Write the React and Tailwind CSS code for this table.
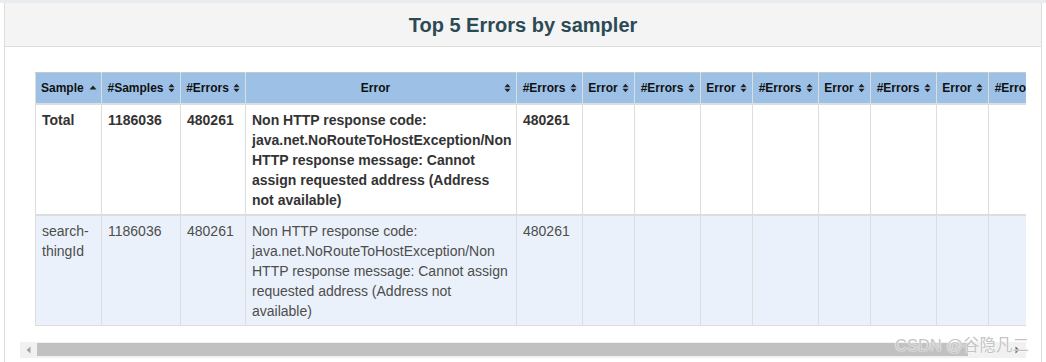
import React from 'react';

const columns = [
  { label: 'Sample', w: 'w-[66px]', sort: 'asc' },
  { label: '#Samples', w: 'w-[79px]' },
  { label: '#Errors', w: 'w-[65px]' },
  { label: 'Error', w: 'w-[271px]' },
  { label: '#Errors', w: 'w-[66px]' },
  { label: 'Error', w: 'w-[52px]' },
  { label: '#Errors', w: 'w-[66px]' },
  { label: 'Error', w: 'w-[52px]' },
  { label: '#Errors', w: 'w-[66px]' },
  { label: 'Error', w: 'w-[52px]' },
  { label: '#Errors', w: 'w-[66px]' },
  { label: 'Error', w: 'w-[52px]' },
  { label: '#Errors', w: 'w-[66px]' },
  { label: 'Error', w: 'w-[52px]' },
];

const errorText =
  'Non HTTP response code: java.net.NoRouteToHostException/Non HTTP response message: Cannot assign requested address (Address not available)';

const rows = [
  { cells: ['Total', '1186036', '480261', errorText, '480261'], total: true },
  { cells: ['search-thingId', '1186036', '480261', errorText, '480261'] },
];

function SortIcon({ dir }) {
  if (dir === 'asc') {
    return (
      <svg width="8" height="9" viewBox="0 0 8 9" className="shrink-0 ml-[5px]">
        <path d="M0.5 6.5 L4 2.5 L7.5 6.5 Z" fill="#222" />
      </svg>
    );
  }
  return (
    <svg width="7" height="10" viewBox="0 0 7 10" className="shrink-0 ml-[4px]">
      <path d="M0.5 4.2 L3.5 0.8 L6.5 4.2 Z" fill="#222" />
      <path d="M0.5 5.8 L3.5 9.2 L6.5 5.8 Z" fill="#222" />
    </svg>
  );
}

export default function App() {
  return (
    <div className="relative w-[1046px] h-[362px] bg-white overflow-hidden font-['Liberation_Sans',Arial,sans-serif]">
      <div className="h-[3px] bg-[#e9ecef]" />

      {/* panel */}
      <div className="ml-[4px] w-[1038px] border-x border-[#dddddd] h-[359px]">
        <div className="h-[44px] bg-[#f4f4f4] border-b border-[#dddddd] flex items-center justify-center">
          <h2 className="text-[20px] font-bold text-[#2c4a54] leading-none">Top 5 Errors by sampler</h2>
        </div>

        <div className="px-[15px] pt-[25px]">
          <div className="overflow-hidden">
            <table className="ml-[15px] table-fixed border-collapse w-[1071px] text-[14px] leading-[20px]">
              <thead>
                <tr className="bg-[#9cc0e6]">
                  {columns.map((c, i) => (
                    <th
                      key={i}
                      className={`${c.w} h-[31px] border-x border-[#dddddd] border-t border-t-[#c8c8c8] border-b-2 border-b-[#dddddd] px-[5px] py-0 text-[12px] font-bold text-[#111] whitespace-nowrap`}
                    >
                      <div className="flex items-center">
                        <span className="flex-1 text-center">{c.label}</span>
                        <SortIcon dir={c.sort} />
                      </div>
                    </th>
                  ))}
                </tr>
              </thead>
              <tbody>
                {rows.map((r, ri) => (
                  <tr
                    key={ri}
                    className={r.total ? 'bg-white' : 'bg-[#eaf1fa]'}
                  >
                    {columns.map((c, ci) => (
                      <td
                        key={ci}
                        className={`border-x border-[#dddddd] ${
                          r.total ? 'border-b-2 font-bold text-[#333]' : 'border-b text-[#4d4d4d]'
                        } border-b-[#dddddd] align-top pl-[6px] pr-[2px] pt-[5px] pb-[4px] text-left`}
                      >
                        {r.cells[ci] || ''}
                      </td>
                    ))}
                  </tr>
                ))}
              </tbody>
            </table>
          </div>

          {/* horizontal scrollbar */}
          <div className="mt-[16px] h-[16px] bg-[#f1f1f1] flex items-center">
            <div className="w-[17px] h-full flex items-center justify-center">
              <svg width="5" height="8" viewBox="0 0 5 8">
                <path d="M4.5 0.5 L0.5 4 L4.5 7.5 Z" fill="#a3a3a3" />
              </svg>
            </div>
            <div className="w-[931px] h-[13px] bg-[#c1c1c1]" />
            <div className="flex-1" />
            <div className="w-[17px] h-full flex items-center justify-center">
              <svg width="5" height="8" viewBox="0 0 5 8">
                <path d="M0.5 0.5 L4.5 4 L0.5 7.5 Z" fill="#505050" />
              </svg>
            </div>
          </div>
        </div>
      </div>

      {/* watermark */}
      <div className="absolute left-[895px] top-[335px] text-[16.5px] leading-[20px] text-[#c4c4c4] font-['Liberation_Sans','Noto_Sans_CJK_SC',sans-serif] [text-shadow:0_0_2px_#fff,0_0_1px_#fff]">
        CSDN @谷隐凡二
      </div>
    </div>
  );
}
